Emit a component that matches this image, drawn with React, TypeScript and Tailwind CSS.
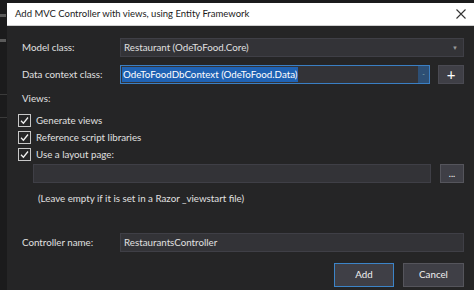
import React from "react";

const font = { fontFamily: 'Lato, "Noto Sans", sans-serif' };

function Check({ label }: { label: string }) {
  return (
    <div className="flex items-center h-[17px]">
      <div className="w-[13px] h-[13px] border border-[#c8c8c8] flex items-center justify-center">
        <svg width="9" height="9" viewBox="0 0 9 9">
          <path d="M1 4.8 L3.4 7.2 L8 1.5" stroke="#f0f0f0" strokeWidth="1.3" fill="none" />
        </svg>
      </div>
      <span className="ml-[5px] text-[#e0e0e0]">{label}</span>
    </div>
  );
}

export default function App() {
  return (
    <div className="w-[474px] h-[290px] overflow-hidden bg-[#1b1b1c] flex" style={font}>
      {/* editor strip behind the dialog */}
      <div className="w-[7px] shrink-0 flex flex-col pt-[14px] gap-[22px]">
        <div className="w-[6px] h-[3px] bg-[#5a5a5a]" />
        <div className="w-[6px] h-[3px] bg-[#5a5a5a]" />
        <div className="w-[7px] h-px bg-[#3a3a3a] mt-[30px]" />
        <div className="w-[7px] h-px bg-[#3a3a3a]" />
      </div>

      <div className="flex-1 flex flex-col mt-[3px]">
        {/* title bar */}
        <div className="h-[23px] bg-white flex items-center justify-between pl-[8px] pr-[8px] border-b border-[#d0d0d0]">
          <span className="text-[9.5px] text-[#1a1a1a] leading-none">
            Add MVC Controller with views, using Entity Framework
          </span>
          <svg width="10" height="10" viewBox="0 0 10 10">
            <path d="M0.5 0.5 L9.5 9.5 M9.5 0.5 L0.5 9.5" stroke="#333" strokeWidth="1.1" />
          </svg>
        </div>

        {/* body */}
        <div className="flex-1 bg-[#252526] pl-[15px] pr-[10px] pt-[12px] text-[9.75px] text-[#e0e0e0]">
          <div className="flex items-center h-[19px]">
            <span className="w-[98px] shrink-0 whitespace-nowrap">Model class:</span>
            <div className="flex-1 h-[19px] bg-[#333337] border border-[#3f3f46] flex items-center justify-between pl-[3px] pr-[5px]">
              <span>Restaurant (OdeToFood.Core)</span>
              <span className="text-[6px] text-[#999]">▼</span>
            </div>
          </div>

          <div className="flex items-center h-[19px] mt-[8px]">
            <span className="w-[98px] shrink-0 whitespace-nowrap">Data context class:</span>
            <div className="flex-1 h-[19px] bg-[#333337] border border-[#3a7fc4] flex items-center pl-px">
              <span className="bg-[#1f62b3] text-white px-px leading-[15px] h-[15px] whitespace-nowrap">
                OdeToFoodDbContext (OdeToFood.Data)
              </span>
              <div className="ml-auto w-[11px] h-full bg-[#2d4f75] flex items-center justify-center">
                <span className="text-[7px] text-[#8aa]">-</span>
              </div>
            </div>
            <button className="ml-[8px] w-[26px] h-[19px] bg-[#3f3f46] border border-[#4a4a52] flex items-center justify-center text-white text-[15px] leading-none">
              +
            </button>
          </div>

          <div className="mt-[8px] h-[13px] leading-[13px]">Views:</div>

          <div className="mt-[7px] -ml-[4px]">
            <Check label="Generate views" />
            <Check label="Reference script libraries" />
            <Check label="Use a layout page:" />
          </div>

          <div className="flex items-center mt-[1px] ml-[11px]">
            <div className="flex-1 h-[19px] bg-[#333337] border border-[#3f3f46]" />
            <button className="ml-[9px] w-[24px] h-[19px] bg-[#3f3f46] border border-[#55555c] flex items-center justify-center text-[9px] text-white leading-none">
              ...
            </button>
          </div>

          <div className="ml-[16px] mt-[8px]">(Leave empty if it is set in a Razor _viewstart file)</div>

          <div className="flex items-center h-[19px] mt-[27px]">
            <span className="w-[98px] shrink-0 whitespace-nowrap">Controller name:</span>
            <div className="flex-1 h-[19px] bg-[#333337] border border-[#3f3f46] flex items-center pl-[3px]">
              RestaurantsController
            </div>
          </div>

          <div className="flex justify-end mt-[11px] gap-[9px]">
            <button className="w-[60px] h-[24px] bg-[#3f3f46] border border-[#3c84c8] text-[#f0f0f0]">
              Add
            </button>
            <button className="w-[61px] h-[24px] bg-[#3f3f46] border border-[#55555c] text-[#f0f0f0]">
              Cancel
            </button>
          </div>
        </div>
      </div>
    </div>
  );
}
